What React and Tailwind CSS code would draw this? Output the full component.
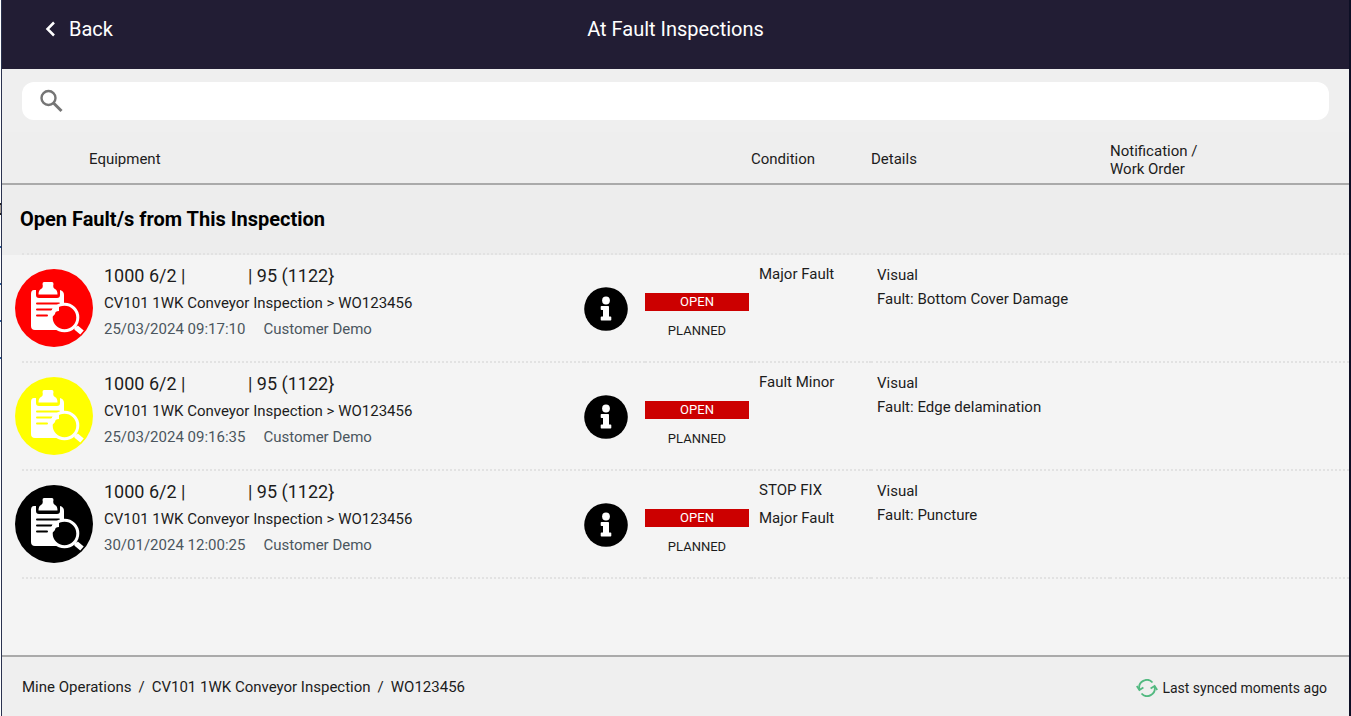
import React, { useState } from 'react';

const faults = [
  {
    id: 1,
    badge: 'bg-[#ff0000] text-[#ff0000]',
    inspection: 'CV101 1WK Conveyor Inspection > WO123456',
    date: '25/03/2024 09:17:10',
    user: 'Customer Demo',
    conditions: ['Major Fault'],
    details: ['Visual', 'Fault: Bottom Cover Damage'],
  },
  {
    id: 2,
    badge: 'bg-[#ffff00] text-[#ffff00]',
    inspection: 'CV101 1WK Conveyor Inspection > WO123456',
    date: '25/03/2024 09:16:35',
    user: 'Customer Demo',
    conditions: ['Fault Minor'],
    details: ['Visual', 'Fault: Edge delamination'],
  },
  {
    id: 3,
    badge: 'bg-black text-black',
    inspection: 'CV101 1WK Conveyor Inspection > WO123456',
    date: '30/01/2024 12:00:25',
    user: 'Customer Demo',
    conditions: ['STOP FIX', 'Major Fault'],
    details: ['Visual', 'Fault: Puncture'],
  },
];

const InspectionIcon = () => (
  <svg viewBox="0 0 78 78" className="w-full h-full" aria-hidden="true">
    {/* clipboard */}
    <path
      fill="#fff"
      d="M19 21h2v5q0 3 3 3h18q3 0 3-3v-5q4 1 4 5v32q0 3-3 3H20q-4 0-4-4V25q0-4 3-4z"
    />
    <path
      fill="#fff"
      d="M29 13h8q1.500 0 1.500 2-1 4 1.500 5 2.500 1 2.500 5.500h-19q0-4.500 2.500-5.500 2.500-1 1.500-5 0-2 1.500-2z"
    />
    <path
      stroke="currentColor"
      strokeWidth="2"
      strokeLinecap="round"
      d="M22 34.500h22M22 40.500h15M22 46.500h10"
    />
    {/* magnifier */}
    <circle cx="49.500" cy="48.500" r="13.300" fill="currentColor" stroke="#fff" strokeWidth="3" />
    <path fill="#fff" d="M36 48q-1-6 3-10l5-2v6q-4 0-4 3-1 2-4 3z" />
    <path stroke="#fff" strokeWidth="3" d="M58.500 57l4 3" />
    <path stroke="#fff" strokeWidth="5.500" d="M61 58.500l6 5" />
  </svg>
);

const InfoIcon = () => (
  <svg viewBox="0 0 44 44" className="size-11" aria-hidden="true">
    <circle cx="22" cy="22" r="21.800" fill="#000" />
    <circle cx="22" cy="13.500" r="3.900" fill="#fff" />
    <path
      fill="#fff"
      d="M17.500 19h6.700q.8 0 .8.800V29.500h1.500q.8 0 .8.800v2.400q0 .8-.8.800h-9q-.8 0-.8-.8v-2.400q0-.8.800-.8H19V23h-1.500q-.8 0-.8-.8v-2.400q0-.8.800-.8z"
    />
  </svg>
);

const SyncIcon = () => (
  <svg
    viewBox="0 0 22 18"
    className="w-[22px] h-[18px]"
    fill="none"
    stroke="#52b980"
    strokeWidth="1.800"
    aria-hidden="true"
  >
    <path d="M3.500 10.500a7.600 7.600 0 0 1 13-7" />
    <path d="M18.500 7.500a7.600 7.600 0 0 1-13 7" />
    <path d="M.8 7l2.600 4 4-2.400M21.200 11l-2.600-4-4 2.400" />
  </svg>
);

const Header = () => (
  <header className="grid grid-cols-3 items-start h-[69px] pt-4 bg-[#221d34] text-white text-xl leading-[26px]">
    <button className="flex items-center justify-self-start gap-3 pl-[43px]">
      <svg viewBox="0 0 12 16" className="w-3 h-4" fill="none" stroke="currentColor" strokeWidth="2.500" aria-hidden="true">
        <path d="M9 1.500L2.500 8 9 14.500" />
      </svg>
      Back
    </button>
    <h1 className="text-center">At Fault Inspections</h1>
  </header>
);

const SearchBar = () => {
  const [query, setQuery] = useState('');

  return (
    <div className="px-5 pt-[13px] pb-3 bg-[#efefef]">
      <label className="flex items-center h-[38px] rounded-xl bg-white px-[18px]">
        <svg viewBox="0 0 24 24" className="size-6 shrink-0" fill="none" stroke="#757575" aria-hidden="true">
          <circle cx="8.500" cy="9" r="7" strokeWidth="2.400" />
          <path d="M13.500 14l8 8" strokeWidth="3" />
        </svg>
        <input
          type="search"
          aria-label="Search"
          value={query}
          onChange={(e) => setQuery(e.target.value)}
          className="flex-1 ml-3 bg-transparent outline-none"
        />
      </label>
    </div>
  );
};

const FaultRow = ({ fault }) => (
  <tr className="h-[108px] align-top">
    <td />
    <td className="border-b-2 border-dotted border-[#e2e2e2]">
      <div className="flex">
        <div className={`size-[78px] shrink-0 rounded-full -ml-[7px] mt-[14px] ${fault.badge}`}>
          <InspectionIcon />
        </div>
        <div className="ml-[11px] pt-[7px]">
          <p className="flex text-lg leading-7">
            <span className="w-36">1000 6/2 |</span>
            <span>| 95 (1122&#125;</span>
          </p>
          <p className="leading-[26px]">{fault.inspection}</p>
          <p className="flex gap-[18px] leading-[26px] text-[#4b565e]">
            <span>{fault.date}</span>
            <span>{fault.user}</span>
          </p>
        </div>
      </div>
    </td>
    <td className="pt-8 border-b-2 border-dotted border-[#e2e2e2]">
      <button aria-label="Fault information" className="block">
        <InfoIcon />
      </button>
    </td>
    <td className="pt-[38px] pr-0.5 text-center text-[13px] leading-[18px] border-b-2 border-dotted border-[#e2e2e2]">
      <p className="bg-[#cc0000] text-white">OPEN</p>
      <p className="mt-[11px]">PLANNED</p>
    </td>
    <td className="pt-[5px] pl-2 border-b-2 border-dotted border-[#e2e2e2]">
      {fault.conditions.map((condition) => (
        <p key={condition} className="leading-7">{condition}</p>
      ))}
    </td>
    <td className="pt-2 pl-1.5 border-b-2 border-dotted border-[#e2e2e2]">
      {fault.details.map((detail) => (
        <p key={detail} className="leading-6">{detail}</p>
      ))}
    </td>
    <td className="border-b-2 border-dotted border-[#e2e2e2]" />
  </tr>
);

const FaultTable = () => (
  <table className="w-full table-fixed border-separate border-spacing-0">
    <colgroup>
      <col className="w-5" />
      <col />
      <col className="w-[61px]" />
      <col className="w-[106px]" />
      <col className="w-[120px]" />
      <col className="w-[239px]" />
      <col className="w-[239px]" />
    </colgroup>
    <thead className="text-left bg-[#eeeeee]">
      <tr className="h-[53px]">
        <th colSpan={4} className="pl-[87px] pt-1 font-normal border-b-2 border-[#aaaaaa]">Equipment</th>
        <th className="pt-1 font-normal border-b-2 border-[#aaaaaa]">Condition</th>
        <th className="pt-1 font-normal border-b-2 border-[#aaaaaa]">Details</th>
        <th className="pt-1 font-normal leading-[18px] border-b-2 border-[#aaaaaa]">
          Notification /<br />Work Order
        </th>
      </tr>
    </thead>
    <tbody>
      <tr className="h-[70px] bg-[#ededed]">
        <td />
        <th colSpan={6} className="text-left text-xl font-bold text-black border-b-2 border-dotted border-[#e2e2e2]">
          <h2 className="-ml-0.5">Open Fault/s from This Inspection</h2>
        </th>
      </tr>
      {faults.map((fault) => (
        <FaultRow key={fault.id} fault={fault} />
      ))}
    </tbody>
  </table>
);

const Footer = () => (
  <footer className="flex items-center justify-between h-[61px] pl-5 pr-[22px] pt-0.5 border-t-2 border-[#aaaaaa] bg-[#efefef]">
    <nav aria-label="Breadcrumb" className="flex gap-[7px]">
      <a href="#operations">Mine Operations</a>
      <span>/</span>
      <a href="#inspection">CV101 1WK Conveyor Inspection</a>
      <span>/</span>
      <a href="#order">WO123456</a>
    </nav>
    <p className="flex items-center gap-1 text-sm">
      <SyncIcon />
      Last synced moments ago
    </p>
  </footer>
);

// Sliver of the window behind, showing at the left edge
const BackWindowEdge = () => (
  <div className="absolute left-0 top-[203px] w-px" aria-hidden="true">
    <div className="h-3 border-y-2 border-[#222222] bg-[#aaa098]" />
    <div className="mt-[31px] h-0.5 bg-[#2d5b9a]" />
    <div className="mt-[35px] h-0.5 bg-[#2d5b9a]" />
    <div className="mt-[35px] h-0.5 bg-[#2d5b9a]" />
    <div className="mt-[35px] h-0.5 bg-[#2d5b9a]" />
  </div>
);

const App = () => (
  <div className="relative pl-px bg-white">
    <BackWindowEdge />
    <div className="flex flex-col min-h-screen border-l border-r-2 border-l-[#2b3350] border-r-[#0d0f25] bg-[#f4f4f4] text-[#1c1c1c] text-[15px] font-[Roboto,sans-serif]">
      <Header />
      <SearchBar />
      <main className="flex-1">
        <FaultTable />
      </main>
      <Footer />
    </div>
  </div>
);

export default App;
